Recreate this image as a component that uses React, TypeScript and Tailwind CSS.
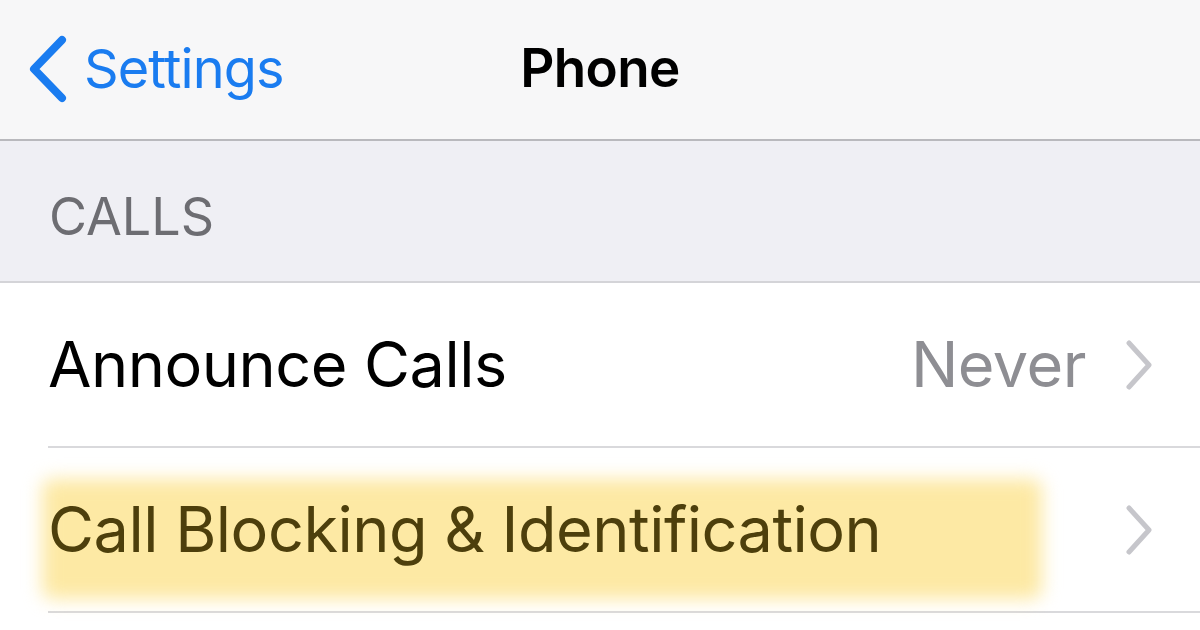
const font = { fontFamily: "Inter, 'Noto Sans', sans-serif" };

function BackChevron() {
  return (
    <svg width="44" height="70" viewBox="0 0 44 70" fill="none">
      <path
        d="M36 6 L8 35 L36 64"
        stroke="#1a7cf0"
        strokeWidth="8"
        strokeLinecap="round"
        strokeLinejoin="round"
      />
    </svg>
  );
}

function Disclosure() {
  return (
    <svg width="30" height="50" viewBox="0 0 30 50" fill="none">
      <path
        d="M5 3 L25 25 L5 47"
        stroke="#c6c6cb"
        strokeWidth="5"
        strokeLinecap="round"
        strokeLinejoin="round"
      />
    </svg>
  );
}

export default function App() {
  return (
    <div className="h-[630px] w-[1200px] overflow-hidden bg-white" style={font}>
      {/* nav bar */}
      <div className="relative flex h-[141px] items-center border-b-2 border-[#b9b9bd] bg-[#f7f7f8]">
        <div className="flex items-center gap-[14px] pl-[26px] pb-[2px]">
          <BackChevron />
          <span className="text-[54px] leading-none tracking-[-0.9px] text-[#1a7cf0]">
            Settings
          </span>
        </div>
        <span className="absolute left-1/2 top-[42px] -translate-x-1/2 text-[53px] font-semibold leading-none tracking-[-0.6px] text-black">
          Phone
        </span>
      </div>

      {/* section header */}
      <div className="flex h-[142px] items-end border-b-2 border-[#d4d4d8] bg-[#efeff4] pb-[38px] pl-[49px]">
        <span className="text-[52px] leading-none text-[#6d6d72]">CALLS</span>
      </div>

      {/* rows */}
      <div className="flex h-[165px] items-center pl-[48px]">
        <div className="flex h-full flex-1 items-center border-b-2 border-[#d9d9dc] pr-[46px]">
          <span className="flex-1 text-[63px] leading-none tracking-[-0.5px] text-black">
            Announce Calls
          </span>
          <span className="mr-[38px] text-[63px] leading-none tracking-[-0.5px] text-[#8e8e93]">
            Never
          </span>
          <Disclosure />
        </div>
      </div>

      <div className="flex h-[165px] items-center pl-[48px]">
        <div className="relative flex h-full flex-1 items-center border-b-2 border-[#d9d9dc] pr-[46px]">
          <div className="absolute left-[-6px] top-[31px] h-[120px] w-[1000px] rounded-[10px] bg-[#fde9a4] blur-[9px]" />
          <span className="relative flex-1 text-[63px] leading-none tracking-[-0.5px] text-[#4d3f0c]">
            Call Blocking &amp; Identification
          </span>
          <Disclosure />
        </div>
      </div>
    </div>
  );
}
